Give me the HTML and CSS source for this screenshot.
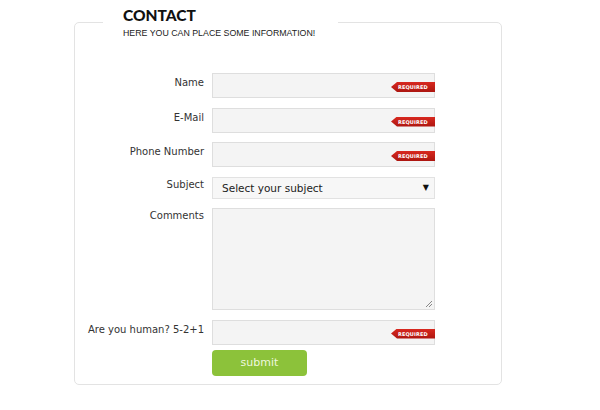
FILE: index.html
```html
<!DOCTYPE html>
<html>
<head>
<meta charset="utf-8">
<link rel="stylesheet" href="styles.css">
</head>
<body>
<div class="card">
  <div class="head">
    <h2 class="title">CONTACT</h2>
    <p class="sub">HERE YOU CAN PLACE SOME INFORMATION!</p>
  </div>
  <form class="form">
    <label class="lbl">Name</label>
    <div class="field"><div class="input"></div><span class="req">REQUIRED</span></div>
    <label class="lbl">E-Mail</label>
    <div class="field"><div class="input"></div><span class="req">REQUIRED</span></div>
    <label class="lbl">Phone Number</label>
    <div class="field"><div class="input"></div><span class="req">REQUIRED</span></div>
    <label class="lbl lbl-sel">Subject</label>
    <div class="field"><div class="select"><span>Select your subject</span><span class="arrow">▼</span></div></div>
    <label class="lbl lbl-ta">Comments</label>
    <div class="field"><div class="textarea"><svg class="grip" width="8" height="8" viewBox="0 0 8 8"><path d="M7 1 L1 7 M7 4 L4 7" stroke="#888" stroke-width="1"/></svg></div></div>
    <label class="lbl">Are you human? 5-2+1</label>
    <div class="field"><div class="input"></div><span class="req">REQUIRED</span></div>
    <div></div>
    <div class="btnrow"><span class="submit">submit</span></div>
  </form>
</div>
</body>
</html>
```
FILE: styles.css
```css
html, body { margin: 0; padding: 0; background: #fff; }
body { width: 600px; height: 410px; overflow: hidden; font-family: "DejaVu Sans", Verdana, sans-serif; }
.card {
  margin: 22px 0 0 74px;
  width: 428px;
  height: 363px;
  border: 1px solid #e3e3e3;
  border-radius: 5px;
  box-sizing: border-box;
}
.head {
  margin: -17px 0 0 28px;
  width: 235px;
  height: 34px;
  background: #fff;
  padding-left: 20px;
  box-sizing: border-box;
}
.title {
  margin: 0;
  font-family: "Lato", "DejaVu Sans", sans-serif;
  font-weight: 900;
  font-size: 15.5px;
  line-height: 18px;
  color: #111;
}
.sub {
  margin: 4px 0 0;
  font-family: "Liberation Sans", Arial, sans-serif;
  font-size: 8.8px;
  line-height: 10px;
  color: #222;
}
.form {
  margin-top: 33px;
  display: grid;
  grid-template-columns: 129px 223px;
  column-gap: 8px;
  row-gap: 9.5px;
}
.lbl {
  text-align: right;
  font-size: 10px;
  color: #333;
  padding-top: 4px;
  line-height: 12px;
  white-space: nowrap;
}
.lbl-sel { padding-top: 2px; }
.lbl-ta { padding-top: 2px; }
.field { position: relative; }
.input {
  height: 25px;
  box-sizing: border-box;
  border: 1px solid #dedede;
  background: #f4f4f4;
}
.req {
  position: absolute;
  right: 0;
  top: 9px;
  width: 44px;
  height: 10px;
  background: linear-gradient(#d8281f, #ac1610);
  clip-path: polygon(6px 0, 100% 0, 100% 100%, 6px 100%, 0 50%);
  color: #fff;
  font-family: "DejaVu Sans", sans-serif;
  font-weight: bold;
  font-size: 5px;
  line-height: 10px;
  padding-left: 7px;
  box-sizing: border-box;
  letter-spacing: 0.1px;
}
.select {
  height: 22px;
  box-sizing: border-box;
  border: 1px solid #e2e2e2;
  background: #f7f7f7;
  display: flex;
  align-items: center;
  justify-content: space-between;
  padding: 0 5px 0 9px;
  font-size: 10.5px;
  color: #222;
}
.arrow { font-size: 8px; color: #111; }
.textarea {
  height: 102px;
  box-sizing: border-box;
  border: 1px solid #dedede;
  background: #f4f4f4;
  display: flex;
  align-items: flex-end;
  justify-content: flex-end;
}
.grip { margin: 0 1px 1px 0; }
.btnrow { margin-top: -4.5px; }
.submit {
  display: flex;
  align-items: center;
  justify-content: center;
  width: 95px;
  height: 26px;
  background: #8cc23a;
  border-radius: 4px;
  color: #eef7de;
  font-size: 11px;
  font-weight: normal;
}
```
